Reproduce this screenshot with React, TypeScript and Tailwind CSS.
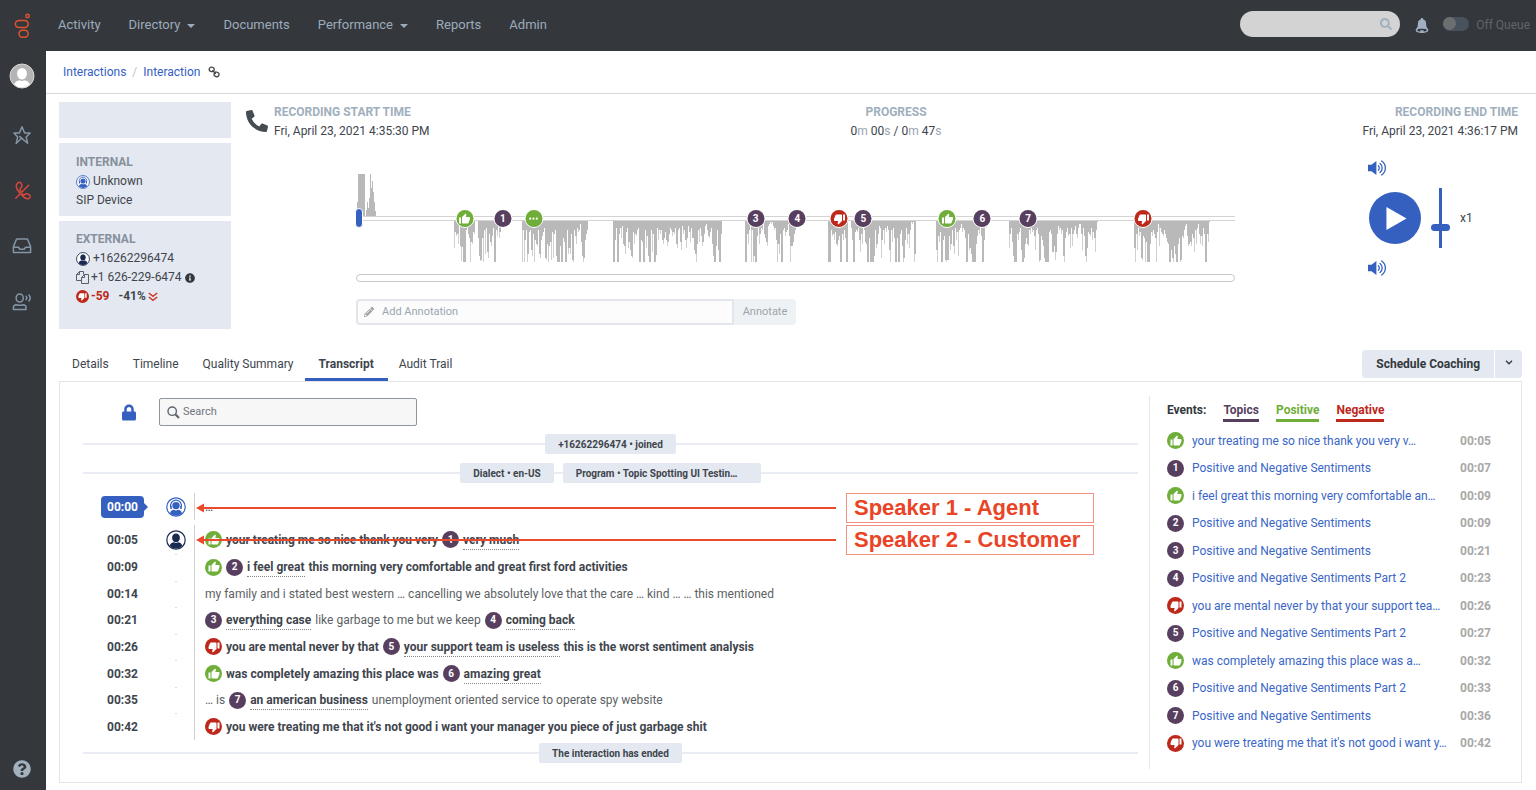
import { Fragment, type ReactNode } from "react";
import { FaInfoCircle, FaLock, FaPencilAlt, FaPhoneAlt, FaQuestionCircle, FaSearch } from "react-icons/fa";
import { MdThumbDown, MdThumbUp } from "react-icons/md";

type Kind = "up" | "down" | "more" | number;

const kindColor = (kind: Kind) =>
  kind === "up" || kind === "more" ? "bg-[#6fae38]" : kind === "down" ? "bg-[#bd281b]" : "bg-[#583f5f]";

function Badge({ kind }: { kind: Kind }) {
  return (
    <span
      className={`inline-flex size-[17px] shrink-0 items-center justify-center rounded-full align-middle text-[10px] leading-none font-bold text-white ${kindColor(kind)}`}
    >
      {kind === "up" && <MdThumbUp className="size-[12px]" aria-label="Positive" />}
      {kind === "down" && <MdThumbDown className="size-[12px]" aria-label="Negative" />}
      {kind === "more" && (
        <svg viewBox="0 0 12 4" className="w-[10px]" fill="currentColor" aria-label="More">
          <circle cx="2" cy="2" r="1.3" />
          <circle cx="6" cy="2" r="1.3" />
          <circle cx="10" cy="2" r="1.3" />
        </svg>
      )}
      {typeof kind === "number" && kind}
    </span>
  );
}

/* ---------- drawings ---------- */

function Logo() {
  return (
    <svg viewBox="0 0 18 26" className="h-[26px] w-[18px]" fill="none" stroke="#e0532f" strokeWidth="1.5">
      <circle cx="13.6" cy="3" r="1.7" />
      <rect x="1.4" y="7.6" width="12.8" height="7" rx="3.5" />
      <rect x="5" y="17.2" width="9.2" height="7" rx="3.4" />
    </svg>
  );
}

function AvatarIcon() {
  return (
    <svg viewBox="0 0 26 26" className="size-[26px]">
      <circle cx="13" cy="13" r="12" fill="#b4b4b4" stroke="#d8d8d8" strokeWidth="1" />
      <path d="M13 5.2c3 0 4.9 2.1 4.9 5.4 0 3.2-2 6-4.9 6s-4.9-2.8-4.9-6c0-3.3 1.9-5.4 4.9-5.4z" fill="#fff" />
      <path d="M5.2 21.5c.8-2.9 3-4 5.3-4.3 1.6.9 3.4.9 5 0 2.300.3 4.500 1.400 5.300 4.300a11.500 11.500 0 0 1-15.600 0z" fill="#fff" />
    </svg>
  );
}

function StarIcon() {
  return (
    <svg viewBox="0 0 20 20" className="size-[20px]" fill="none" stroke="currentColor" strokeWidth="1.5" strokeLinejoin="round" strokeLinecap="round">
      <path d="M4.300 18.200 5.700 12 1.900 8h5.500L10 1.800 12.600 8h5.500l-3.900 4 1.400 6.200L7.800 11.600" />
      <path d="M4.300 18.200 9.600 13.200" />
    </svg>
  );
}

function PhoneOffIcon() {
  return (
    <svg viewBox="0 0 20 20" className="size-[20px]" fill="none" stroke="#d8473a" strokeWidth="1.5" strokeLinecap="round" strokeLinejoin="round">
      <path d="M3.800 17.200 16.600 4.200" />
      <path d="M7.600 11.600C5.600 9.700 4 6.600 4.400 4.200 4.800 2.200 6.800.9 8.200 1.500c1.600.7 2 3.400 1.400 4.800-.4.900-1.600 1-1.700 2 0 .7.500 1.600 1.100 2.300" />
      <path d="M9.300 13.500c1.700 2.200 4.200 4 6.300 4.200 1.800.2 2.900-1.500 2.400-2.900-.5-1.500-2.600-2.300-4-2-.9.200-1.200 1.200-2.100 1-.5-.1-1-.4-1.400-.8" />
    </svg>
  );
}

function InboxIcon() {
  return (
    <svg viewBox="0 0 20 18" className="h-[18px] w-[20px]" fill="none" stroke="currentColor" strokeWidth="1.5" strokeLinejoin="round">
      <path d="M1.400 9.600 4.600 2h10.800l3.200 7.600v6H1.400z" />
      <path d="M1.400 10.200h5l1.500 2h4.200l1.500-2h5" />
    </svg>
  );
}

function SpeakingIcon() {
  return (
    <svg viewBox="0 0 20 20" className="size-[20px]" fill="none" stroke="currentColor" strokeWidth="1.5" strokeLinecap="round" strokeLinejoin="round">
      <rect x="4.200" y="2" width="7" height="8" rx="3.500" />
      <path d="M1.400 17.400v-1.700c0-1.900 1.300-3 3-3 2 .7 4.600.7 6.600 0 1.700 0 3 1.100 3 3v1.700z" />
      <path d="M14.200 4.400c.7 1 .7 2.200 0 3.200M17 3c1.400 1.800 1.400 4.200 0 6" />
    </svg>
  );
}

function BellIcon() {
  return (
    <svg viewBox="0 0 14 17" className="h-[17px] w-[14px]" fill="#9fb0c3">
      <path d="M7 1c.7 0 1.200.5 1.200 1.200 1.900.6 2.900 2.200 2.900 4.300 0 3 .7 4.500 2.100 5.600v1.400c0 1.500-2.800 2.500-6.200 2.500S.8 15 .8 13.500v-1.400c1.400-1.100 2.100-2.600 2.100-5.600 0-2.100 1-3.700 2.900-4.300C5.800 1.500 6.300 1 7 1z" />
      <ellipse cx="7" cy="13.200" rx="4.800" ry="1.400" fill="#34383d" />
      <path d="M5.400 13.200h3.200v1a1.600 1.200 0 0 1-3.200 0z" />
    </svg>
  );
}

function AgentIcon({ className }: { className: string }) {
  return (
    <svg viewBox="0 0 20 20" className={className}>
      <circle cx="10" cy="10" r="9.200" fill="#fff" stroke="#3560c0" strokeWidth="1.200" />
      <path d="M4.900 10.200a5.400 5.400 0 1 1 10.200 0" fill="none" stroke="#3560c0" strokeWidth="1.200" />
      <circle cx="10" cy="8.600" r="3.700" fill="#3560c0" />
      <path d="M4.300 9h1.500v3H4.300zM14.200 9h1.500v3h-1.500z" fill="#3560c0" />
      <path d="M4 16.200c.4-2.200 2-3.200 4-3.500 1.200.9 2.800.9 4 0 2 .3 3.600 1.300 4 3.500a8.600 8.600 0 0 1-12 0z" fill="#3560c0" />
    </svg>
  );
}

function CustomerIcon({ className }: { className: string }) {
  return (
    <svg viewBox="0 0 20 20" className={className}>
      <circle cx="10" cy="10" r="9.200" fill="#fff" stroke="#1b2a50" strokeWidth="1.200" />
      <path d="M10 3.600c2.400 0 3.900 1.700 3.900 4.100S12.300 12.200 10 12.200 6.100 10.100 6.100 7.700 7.600 3.600 10 3.600z" fill="#1b2a50" />
      <path d="M3.800 15.900c.4-2.300 2-3.300 4.200-3.600 1.200.9 2.800.9 4 0 2.200.3 3.800 1.300 4.200 3.600a8.600 8.600 0 0 1-12.400 0z" fill="#1b2a50" />
    </svg>
  );
}

function CopyIcon() {
  return (
    <svg viewBox="0 0 13 13" className="size-[13px]" fill="none" stroke="#5a606a" strokeWidth="1" strokeLinejoin="round">
      <path d="M5.500 9.500h-5v-6l3-3h4v3" />
      <path d="M3.500.5v3h-3" />
      <path d="M5.500 6.500l3-3h4v9h-7z" />
      <path d="M8.500 3.500v3h-3" />
    </svg>
  );
}

function LinkIcon() {
  return (
    <svg viewBox="0 0 12 12" className="size-[12px]" fill="none" stroke="#44484c" strokeWidth="1.300" strokeLinecap="round">
      <rect x="1.200" y="1.200" width="5" height="4.400" rx="2.200" transform="rotate(20 3.700 3.500)" />
      <rect x="6" y="6.200" width="5" height="4.400" rx="2.200" transform="rotate(20 8.500 8.500)" />
      <path d="M4.600 4.600l2.900 2.900" />
    </svg>
  );
}

function DoubleDownIcon() {
  return (
    <svg viewBox="0 0 10 10" className="size-[10px]" fill="none" stroke="#d0342a" strokeWidth="1.500">
      <path d="M.8 1 5 4.400 9.200 1M.8 5 5 8.400 9.200 5" />
    </svg>
  );
}

function VolumeIcon() {
  return (
    <svg viewBox="0 0 20 16" className="h-[16px] w-[20px]" fill="none" stroke="#3560c0" strokeWidth="1.300" strokeLinecap="round">
      <path d="M1 4.800h3.500L9.400 1v14L4.500 11.200H1z" fill="#3560c0" stroke="none" />
      <path d="M11.400 5.800c1.200 1 1.200 3.400 0 4.400M13 3.400c2.900 2.200 2.900 7 0 9.200M14.600 1c5 3.300 5 10.700 0 14" />
    </svg>
  );
}

/* ---------- wave form ---------- */

const bursts: { at: number; levels: number[] }[] = [
  { at: 98, levels: [28, 12, 16, 14, 24, 5, 26, 41, 27, 42, 42, 42, 10, 8, 14, 18, 42, 22, 24, 12, 14] },
  { at: 122, levels: [18, 36, 41, 40, 18, 42, 10, 34, 8, 32, 38, 14, 22, 26, 16, 8, 42, 42, 10, 16, 6, 18, 12] },
  { at: 166, levels: [42, 10, 42, 20, 10, 42, 34, 12, 10, 30, 36, 14, 42, 20, 24, 26, 10, 34, 38, 20, 16, 12, 8, 38, 40, 24, 42, 26, 22, 40, 12, 38, 14, 10, 36, 42, 42, 42, 26, 42, 42, 18, 22, 42, 42, 10, 34, 28, 34, 14, 40, 42, 10, 16, 24, 8, 12, 10, 4, 22, 36, 42, 38, 20, 14, 10] },
  { at: 257, levels: [42, 42, 20, 8, 42, 42, 14, 8, 18, 6, 24, 26, 34, 12, 8, 28, 22, 30, 36, 38, 12, 24, 14, 16, 10, 8, 42, 42, 20, 22, 42, 42, 10, 28, 16, 36, 42, 42, 10, 32, 14, 42, 42, 35, 8, 20, 10, 14, 10, 20, 24, 18, 12, 20, 26, 22, 14, 8, 10, 16, 12, 14, 8, 24, 28, 10, 8, 22, 30, 6, 14, 10, 20, 28, 18, 6, 12, 22, 8, 18, 18, 30, 34, 42, 24, 10, 22, 8, 16, 26, 22, 14, 6, 4, 10, 16, 18, 12, 8, 24, 36, 42, 42, 26, 10, 30, 42, 42, 14] },
  { at: 389, levels: [42, 42, 14, 24, 10, 6, 42, 10, 42, 36, 42, 42, 16, 8, 24, 14, 8, 10, 4, 14, 18, 22, 26, 6, 4, 2, 4, 2, 6, 10, 8, 20, 42, 24, 34, 14, 42, 42, 10, 8, 16, 12, 10, 4, 16, 42, 26, 26, 22, 14, 10, 8] },
  { at: 473, levels: [42, 42, 42, 10, 16, 14, 20, 12, 24, 26, 20, 16, 42, 42, 14, 20, 10, 18, 42, 42] },
  { at: 496, levels: [8, 20, 42, 42, 12, 10, 12, 8, 20, 32, 14, 24, 8, 10, 22, 24, 42, 42, 18, 42, 42, 42, 42, 36, 10, 28, 24, 14, 6, 8, 38, 20, 10, 24, 8, 12, 6, 10, 30, 42, 10, 22, 8, 18, 42, 42, 18, 42, 42, 14, 10, 26, 42, 38, 20, 8, 24, 14, 28, 10, 2, 4, 2, 42, 34] },
  { at: 581, levels: [30, 42, 16, 22, 12, 42, 42, 20, 16, 40, 42, 40, 40, 16, 30, 24, 10, 26, 34, 8, 20, 12, 36, 10, 8, 4, 12, 8, 10, 18, 42, 42, 14, 30, 28, 34, 42, 42, 42, 42, 24, 16, 10, 14, 8, 16, 42, 42, 20, 4, 8] },
  { at: 654, levels: [28, 14, 8, 22, 36, 42, 42, 42, 14, 20, 12, 8, 30, 42, 42, 38, 24, 18, 24, 26, 10, 14, 8, 12, 10, 16, 30, 10, 8, 14, 42, 40, 16, 20, 26, 38, 42, 42, 42, 42, 12, 10, 14, 32, 32, 26, 40, 32, 14, 6, 10, 8, 14, 10, 36, 42, 18, 12, 8, 16, 14, 28, 8, 26, 14, 10, 6, 14, 18, 8, 4, 4, 14, 30, 8, 16, 36, 42, 28, 12, 14, 16, 8, 20, 12, 18, 32, 10, 2] },
  { at: 779, levels: [28, 42, 14, 30, 8, 16, 12, 38, 40, 16, 18, 42, 22, 42, 42, 42, 24, 12, 16, 10, 14, 18, 42, 12, 4, 26, 8, 12, 14, 16, 10, 14, 18, 22, 24, 42, 42, 30, 38, 42, 26, 34, 42, 42, 24, 18, 42, 40, 16, 18, 10, 6, 4, 16, 26, 24, 22, 26, 14, 18, 32, 10, 24, 8, 4, 14, 24, 16, 26, 8, 14, 42, 42, 14, 22, 2] },
];

/* A lone peak is drawn in a lighter tone beyond the height of its neighbours. */
const bars = bursts.flatMap(({ at, levels }) =>
  levels.map((level, i) => {
    const shoulder = Math.max(levels[i - 1] ?? 0, levels[i + 1] ?? 0);
    return { x: at + i, body: Math.min(level, shoulder), peak: level };
  }),
);
const peakPath = bars.map(({ x, peak }) => `M${x} 46h1v${peak}h-1z`).join("");
const bodyPath = bars.map(({ x, body }) => `M${x} 46h1v${body}h-1z`).join("");

const agentLevels = [14, 42, 42, 42, 42, 42, 42, 42, 0, 6, 14, 8, 18, 42, 28, 35, 24, 14, 5];
const agentPath = agentLevels.map((level, i) => `M${1 + i} 42h1v-${level}h-1z`).join("");

const markers: { at: number; kind: Kind }[] = [
  { at: 109, kind: "up" },
  { at: 147, kind: 1 },
  { at: 178, kind: "more" },
  { at: 400, kind: 3 },
  { at: 442, kind: 4 },
  { at: 484, kind: "down" },
  { at: 508, kind: 5 },
  { at: 592, kind: "up" },
  { at: 627, kind: 6 },
  { at: 673, kind: 7 },
  { at: 788, kind: "down" },
];

const trackLength = 880;

function WaveForm() {
  return (
    <div className="relative h-[90px]">
      <svg viewBox="0 0 880 90" preserveAspectRatio="none" className="block h-full w-full" fill="#b9b9b9" shapeRendering="crispEdges">
        <path d={agentPath} />
        <path d={peakPath} fill="#d0d0d0" />
        <path d={bodyPath} />
      </svg>
      <div className="absolute inset-x-0 top-[42px] h-[5px] border-y border-[#d4d4d4] bg-white" />
      <div className="absolute top-[34px] -left-px h-[20px] w-2 rounded-sm border border-white bg-[#3560c0]" />
      {markers.map(({ at, kind }) => (
        <span
          key={at}
          className="absolute top-[35px] flex -translate-x-1/2 rounded-full border border-white"
          style={{ left: `${(at / trackLength) * 100}%` }}
        >
          <Badge kind={kind} />
        </span>
      ))}
    </div>
  );
}

/* ---------- page parts ---------- */

const navItems = [
  { label: "Activity" },
  { label: "Directory", menu: true },
  { label: "Documents" },
  { label: "Performance", menu: true },
  { label: "Reports" },
  { label: "Admin" },
];

function TopBar() {
  return (
    <header className="flex h-[51px] items-center bg-[#34383d] pr-1.5 text-[13px] text-[#9dabba]">
      <a href="#home" aria-label="Home" className="flex w-[45px] justify-center">
        <Logo />
      </a>
      <nav className="flex flex-1 items-center gap-7 pb-[2px] pl-[13px]">
        {navItems.map(({ label, menu }) => (
          <a key={label} href={`#${label.toLowerCase()}`} className="flex items-center gap-[7px]">
            {label}
            {menu && (
              <svg viewBox="0 0 8 4" className="mt-[2px] h-1 w-2" fill="currentColor">
                <path d="M0 0h8L4 4z" />
              </svg>
            )}
          </a>
        ))}
      </nav>
      <div className="flex items-center pb-1">
        <label className="flex h-[26px] w-[160px] items-center rounded-full bg-[#d3d3d3] pr-2 pl-4">
          <input aria-label="Search directory" className="w-full min-w-0 bg-transparent outline-none" />
          <FaSearch className="size-[12px] shrink-0 text-[#9fb0c0]" />
        </label>
        <button aria-label="Notifications" className="mt-1 ml-[15px]">
          <BellIcon />
        </button>
        <label className="ml-[14px] flex items-center gap-[7px] text-[12px] text-[#5f656c]">
          <input type="checkbox" className="peer sr-only" />
          <span className="flex h-[14px] w-[26px] items-center rounded-full bg-[#48525c]">
            <span className="size-[13px] rounded-full bg-[#6c6f70]" />
          </span>
          <span className="mt-[2px]">Off Queue</span>
        </label>
      </div>
    </header>
  );
}

function SideBar() {
  return (
    <aside className="flex w-[46px] shrink-0 flex-col items-center bg-[#34383d] pt-3 pr-[2px] pb-3 text-[#8495a5]">
      <button aria-label="Profile">
        <AvatarIcon />
      </button>
      <button aria-label="Favorites" className="mt-9">
        <StarIcon />
      </button>
      <button aria-label="Calls" className="mt-9">
        <PhoneOffIcon />
      </button>
      <button aria-label="Inbox" className="mt-9">
        <InboxIcon />
      </button>
      <button aria-label="Agent assist" className="mt-[37px]">
        <SpeakingIcon />
      </button>
      <button aria-label="Help" className="mt-auto">
        <FaQuestionCircle className="size-[18px] text-[#a3b0bd]" />
      </button>
    </aside>
  );
}

function Participants() {
  return (
    <div className="flex w-[172px] shrink-0 flex-col gap-[5px] leading-[19px]">
      <div className="h-9 bg-[#e4e8f0]" />
      <section className="h-[73px] bg-[#e4e8f0] px-[17px] pt-[10px]">
        <h2 className="font-bold text-[#86919d]">INTERNAL</h2>
        <p className="flex items-center gap-[3px]">
          <AgentIcon className="size-[14px]" />
          Unknown
        </p>
        <p>SIP Device</p>
      </section>
      <section className="h-[108px] bg-[#e4e8f0] px-[17px] pt-[9px]">
        <h2 className="font-bold text-[#86919d]">EXTERNAL</h2>
        <p className="flex items-center gap-[3px]">
          <CustomerIcon className="size-[14px]" />
          +16262296474
        </p>
        <p className="flex items-center gap-[2px]">
          <CopyIcon />
          +1 626-229-6474
          <FaInfoCircle className="ml-px size-[10px] text-[#33383d]" />
        </p>
        <p className="flex items-center gap-[2px] font-bold">
          <span className="flex size-[13px] items-center justify-center rounded-full bg-[#bd281b] text-white">
            <MdThumbDown className="size-[9px]" />
          </span>
          <span className="text-[#bd281b]">-59</span>
          <span className="ml-[7px]">-41%</span>
          <DoubleDownIcon />
        </p>
      </section>
    </div>
  );
}

function Recording() {
  return (
    <div className="flex min-w-0 flex-1 flex-col">
      <div className="flex justify-between pt-px pr-1 leading-[19px]">
        <div className="flex gap-[6px]">
          <FaPhoneAlt className="mt-[7px] size-[22px] text-[#454c53]" />
          <div>
            <h2 className="font-bold text-[#a0afbd]">RECORDING START TIME</h2>
            <p>Fri, April 23, 2021 4:35:30 PM</p>
          </div>
        </div>
        <div className="text-center">
          <h2 className="font-bold text-[#a0afbd]">PROGRESS</h2>
          <p>
            0<span className="text-[#9aa5b1]">m</span> 00<span className="text-[#9aa5b1]">s</span> / 0
            <span className="text-[#9aa5b1]">m</span> 47<span className="text-[#9aa5b1]">s</span>
          </p>
        </div>
        <div className="text-right">
          <h2 className="font-bold text-[#a0afbd]">RECORDING END TIME</h2>
          <p>Fri, April 23, 2021 4:36:17 PM</p>
        </div>
      </div>
      <div className="mt-[19px] flex pl-[110px]">
        <div className="min-w-0 flex-1 pt-[14px]">
          <WaveForm />
          <div className="mt-[10px] h-2 rounded-full border border-[#c9c9c9]" />
          <div className="mt-[17px] flex h-[26px] w-[440px] text-[11px]">
            <label className="flex flex-1 items-center gap-2 rounded-l-sm border-2 border-[#e2e6ea] bg-[#fcfcfc] px-[6px]">
              <FaPencilAlt className="size-[10px] shrink-0 text-[#a0a0a0]" />
              <input
                aria-label="Annotation"
                placeholder="Add Annotation"
                className="w-full bg-transparent outline-none placeholder:text-[#99a5b3]"
              />
            </label>
            <button className="w-[62px] rounded-r-sm bg-[#eff2f5] text-[#9ea4ab]">Annotate</button>
          </div>
        </div>
        <div className="ml-[132px] flex w-[155px] flex-col">
          <button aria-label="Mute agent" className="w-5">
            <VolumeIcon />
          </button>
          <div className="my-3 flex h-[60px] items-center">
            <button aria-label="Play" className="ml-[2px] flex size-[52px] items-center justify-center rounded-full bg-[#3560c0]">
              <svg viewBox="0 0 21 24" className="ml-[3px] h-[23px] w-[21px]" fill="#fff">
                <path d="M0 0 21 12 0 24z" />
              </svg>
            </button>
            <label className="relative ml-[10px] flex h-[60px] w-[19px] justify-center">
              <input type="range" aria-label="Playback speed" className="absolute inset-0 w-full opacity-0" />
              <span className="h-full w-[3px] bg-[#3560c0]" />
              <span className="absolute top-9 left-0 h-[7px] w-full rounded-sm bg-[#3560c0]" />
            </label>
            <span className="ml-[10px]">x1</span>
          </div>
          <button aria-label="Mute customer" className="w-5">
            <VolumeIcon />
          </button>
        </div>
      </div>
    </div>
  );
}

const tabs = ["Details", "Timeline", "Quality Summary", "Transcript", "Audit Trail"];

function TabBar() {
  return (
    <div className="flex items-start justify-between">
      <div role="tablist" className="flex">
        {tabs.map((tab) => {
          const active = tab === "Transcript";
          return (
            <button
              key={tab}
              role="tab"
              aria-selected={active}
              className={`h-[31px] border-b-[3px] ${active ? "-mx-px border-[#3560c0] px-[14px] font-bold" : "border-transparent px-3"}`}
            >
              {tab}
            </button>
          );
        })}
      </div>
      <div className="flex h-[28px] gap-px text-[#33383d]">
        <button className="rounded-l-sm bg-[#e4e8f0] px-[14px] font-bold">Schedule Coaching</button>
        <button aria-label="More coaching options" className="flex w-[27px] items-center justify-center rounded-r-sm bg-[#e4e8f0] pb-1">
          <svg viewBox="0 0 8 5" className="w-[8px]" fill="none" stroke="currentColor" strokeWidth="1.300">
            <path d="M1 .8l3 3 3-3" />
          </svg>
        </button>
      </div>
    </div>
  );
}

function Divider({ children }: { children: ReactNode }) {
  return (
    <div className="flex h-5 items-center text-[10px] font-bold">
      <span className="h-[2px] flex-1 bg-[#e9ecf2]" />
      {children}
      <span className="h-[2px] flex-1 bg-[#e9ecf2]" />
    </div>
  );
}

function Chip({ children }: { children: ReactNode }) {
  return <span className="flex h-5 items-center rounded-xs bg-[#e4e8f0] px-[13px] whitespace-nowrap">{children}</span>;
}

type Part = string | { badge: Kind } | { topic: string } | { strong: string };

const firstCustomerLine: { time: string; parts: Part[] } = {
  time: "00:05",
  parts: [{ badge: "up" }, { strong: "your treating me so nice thank you very" }, { badge: 1 }, { topic: "very much" }],
};

const customerLines: { time: string; parts: Part[] }[] = [
  { time: "00:09", parts: [{ badge: "up" }, { badge: 2 }, { topic: "i feel great" }, { strong: "this morning very comfortable and great first ford activities" }] },
  { time: "00:14", parts: ["my family and i stated best western … cancelling we absolutely love that the care … kind … … this mentioned"] },
  { time: "00:21", parts: [{ badge: 3 }, { topic: "everything case" }, "like garbage to me but we keep", { badge: 4 }, { topic: "coming back" }] },
  { time: "00:26", parts: [{ badge: "down" }, { strong: "you are mental never by that" }, { badge: 5 }, { topic: "your support team is useless" }, { strong: "this is the worst sentiment analysis" }] },
  { time: "00:32", parts: [{ badge: "up" }, { strong: "was completely amazing this place was" }, { badge: 6 }, { topic: "amazing great" }] },
  { time: "00:35", parts: ["… is", { badge: 7 }, { topic: "an american business" }, "unemployment oriented service to operate spy website"] },
  { time: "00:42", parts: [{ badge: "down" }, { strong: "you were treating me that it's not good i want your manager you piece of just garbage shit" }] },
];

function LineText({ parts }: { parts: Part[] }) {
  return (
    <p className="flex items-center gap-1 whitespace-nowrap">
      {parts.map((part, i) => (
        <Fragment key={i}>
          {typeof part === "string" ? (
            <span className="text-[#5c5f64]">{part}</span>
          ) : "badge" in part ? (
            <Badge kind={part.badge} />
          ) : "topic" in part ? (
            <span className="-mb-px border-b border-dotted border-[#888] font-bold">{part.topic}</span>
          ) : (
            <span className="font-bold">{part.strong}</span>
          )}
        </Fragment>
      ))}
    </p>
  );
}

function Line({ time, parts, icon }: { time: string; parts: Part[]; icon?: ReactNode }) {
  return (
    <div className="flex">
      <span className="flex w-[74px] items-center pl-6 font-bold">{time}</span>
      <span className="flex w-[37px] items-center justify-center">
        {icon ?? <span className="h-px w-[2px] self-start bg-[#dcdcdc]" />}
      </span>
      <div className="flex min-w-0 flex-1 items-center border-l border-[#cfcfcf] pl-[10px]">
        <LineText parts={parts} />
      </div>
    </div>
  );
}

function Callout({ children }: { children: string }) {
  return (
    <div className="absolute top-0 left-[113px] flex items-center gap-[10px]">
      <svg viewBox="0 0 640 10" className="h-[10px] w-[640px]">
        <path d="M8 5H640" stroke="#ea4a2c" strokeWidth="1.800" />
        <path d="M0 5 8 .5v9z" fill="#ea4a2c" />
      </svg>
      <span className="flex h-[30px] w-[248px] items-center border border-[#f2917f] pl-[7px] font-['Liberation_Sans',Arial,sans-serif] text-[22px] leading-7 font-bold text-[#ea4427]">
        {children}
      </span>
    </div>
  );
}

function Transcript() {
  return (
    <div className="flex min-w-0 flex-1 flex-col pb-[6px]">
      <div className="flex h-7 items-center pl-[39px]">
        <button aria-label="Lock" className="text-[#3560c0]">
          <FaLock className="h-[17px] w-[14px]" />
        </button>
        <label className="ml-[23px] flex h-7 w-[258px] items-center gap-[3px] rounded-xs border border-[#8f959d] bg-[#f7f7f7] px-[7px] text-[11px]">
          <svg viewBox="0 0 13 13" className="size-[13px] shrink-0" fill="none" stroke="#5e6670">
            <circle cx="5.200" cy="5.200" r="4.200" strokeWidth="1.400" />
            <path d="M8.300 8.300l3.700 3.700" strokeWidth="2.200" />
          </svg>
          <input aria-label="Search transcript" placeholder="Search" className="w-full bg-transparent outline-none placeholder:text-[#70767e]" />
        </label>
      </div>
      <div className="mt-2">
        <Divider>
          <Chip>+16262296474 • joined</Chip>
        </Divider>
      </div>
      <div className="mt-[9px]">
        <Divider>
          <Chip>Dialect • en-US</Chip>
          <span className="h-[2px] w-[9px] bg-[#e9ecf2]" />
          <Chip>
            <span className="w-[172px] truncate">Program • Topic Spotting UI Testin…</span>
          </Chip>
        </Divider>
      </div>
      <div className="relative mt-[10px] flex h-[27px]">
        <span className="flex w-[74px] items-center pl-[18px]">
          <span className="flex h-[22px] items-center rounded-sm bg-[#3560c0] px-[6px] font-bold text-white">00:00</span>
          <span className="border-y-4 border-l-4 border-y-transparent border-l-[#3560c0]" />
        </span>
        <span className="flex w-[37px] items-center justify-center">
          <AgentIcon className="size-[20px]" />
        </span>
        <span className="flex flex-1 items-center border-l border-[#cfcfcf] pl-[10px]">…</span>
        <Callout>Speaker 1 - Agent</Callout>
      </div>
      <div className="relative mt-[5px] grid h-[29px]">
        <Line {...firstCustomerLine} icon={<CustomerIcon className="size-[20px]" />} />
        <Callout>Speaker 2 - Customer</Callout>
      </div>
      <div className="grid h-[186px] grid-rows-7">
        {customerLines.map((line) => (
          <Line key={line.time} {...line} />
        ))}
      </div>
      <div className="mt-[3px]">
        <Divider>
          <Chip>The interaction has ended</Chip>
        </Divider>
      </div>
    </div>
  );
}

const events: { kind: Kind; text: string; time: string }[] = [
  { kind: "up", text: "your treating me so nice thank you very v…", time: "00:05" },
  { kind: 1, text: "Positive and Negative Sentiments", time: "00:07" },
  { kind: "up", text: "i feel great this morning very comfortable an…", time: "00:09" },
  { kind: 2, text: "Positive and Negative Sentiments", time: "00:09" },
  { kind: 3, text: "Positive and Negative Sentiments", time: "00:21" },
  { kind: 4, text: "Positive and Negative Sentiments Part 2", time: "00:23" },
  { kind: "down", text: "you are mental never by that your support tea…", time: "00:26" },
  { kind: 5, text: "Positive and Negative Sentiments Part 2", time: "00:27" },
  { kind: "up", text: "was completely amazing this place was a…", time: "00:32" },
  { kind: 6, text: "Positive and Negative Sentiments Part 2", time: "00:33" },
  { kind: 7, text: "Positive and Negative Sentiments", time: "00:36" },
  { kind: "down", text: "you were treating me that it's not good i want y…", time: "00:42" },
];

function Events() {
  return (
    <aside className="-mt-[2px] ml-[11px] w-[372px] shrink-0 border-l border-[#e6e6e6] pr-[30px] pl-[17px]">
      <div className="flex h-[31px] items-start pt-[5px] font-bold text-[#33383d]">
        <span>Events:</span>
        <button className="ml-[17px] border-b-[3px] border-[#583f5f] text-[#583f5f]">Topics</button>
        <button className="ml-[17px] border-b-[3px] border-[#6fae38] text-[#6fae38]">Positive</button>
        <button className="ml-[17px] border-b-[3px] border-[#bd281b] text-[#bd281b]">Negative</button>
      </div>
      <ul className="grid h-[330px] grid-rows-12">
        {events.map(({ kind, text, time }, i) => (
          <li key={i} className="flex items-center gap-2">
            <Badge kind={kind} />
            <a href={`#event-${i + 1}`} className="min-w-0 flex-1 truncate text-[#3a66c6]">
              {text}
            </a>
            <time className="font-bold text-[#a8a8a8]">{time}</time>
          </li>
        ))}
      </ul>
    </aside>
  );
}

export default function App() {
  return (
    <div className="flex min-h-screen flex-col bg-white font-[Roboto,sans-serif] text-[12px] text-[#40454d]">
      <TopBar />
      <div className="flex flex-1">
        <SideBar />
        <main className="min-w-0 flex-1">
          <nav aria-label="Breadcrumb" className="flex h-[43px] items-center border-b border-[#d9d9d9] pl-[17px] text-[#3560c0]">
            <a href="#interactions">Interactions</a>
            <span className="mx-[6px] text-[#c4c4c4]">/</span>
            <a href="#interaction">Interaction</a>
            <button aria-label="Copy link" className="ml-2">
              <LinkIcon />
            </button>
          </nav>
          <div className="pt-2 pr-[14px] pb-[7px] pl-[13px]">
            <div className="flex gap-[15px]">
              <Participants />
              <Recording />
            </div>
            <div className="mt-[21px] pl-px">
              <TabBar />
            </div>
            <div className="flex border border-[#e2e4e7] pt-4 pb-[13px] pl-[23px]">
              <Transcript />
              <Events />
            </div>
          </div>
        </main>
      </div>
    </div>
  );
}
